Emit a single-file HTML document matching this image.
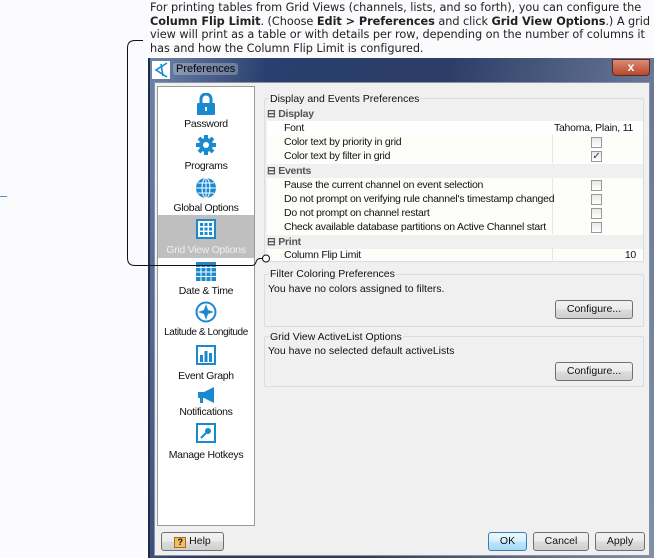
<!DOCTYPE html>
<html><head><meta charset="utf-8"><style>
*{box-sizing:border-box;margin:0;padding:0}
body{width:654px;height:558px;background:#fbfbfd;position:relative;overflow:hidden;font-family:"Liberation Sans",sans-serif;font-size:11px;color:#111}
.a{position:absolute;white-space:nowrap}
.intro{left:150px;top:1px;width:504px;font-family:"DejaVu Sans",sans-serif;font-size:11.3px;line-height:13.7px;color:#222;letter-spacing:-0.05px;white-space:normal}
.win{left:148px;top:58px;width:506px;height:500px;background:linear-gradient(100deg,#6f85a8 0%,#2a3f6e 20%,#2b3c66 50%,#5f6e8e 80%,#8090aa 100%);border-left:2px solid #1c2a4c}
.body{left:154px;top:82px;width:496px;height:474px;background:#f0f0f0;border:1px solid #8a93a6}
.side{left:157px;top:86px;width:98px;height:440px;background:#fff;border:1px solid #9a9a9a}
.it{position:absolute;left:0;width:96px;text-align:center;font-size:10.5px;white-space:nowrap;letter-spacing:-0.3px}
.grp{border:1px solid #d8dce4;border-radius:2px}
.row{position:absolute;left:267px;width:376px;height:14px;line-height:14px;font-size:10.5px;white-space:nowrap;letter-spacing:-0.25px}
.row span{position:absolute;left:17px;white-space:nowrap}
.row .v{left:285px;width:90px;height:14px;border-left:1px solid #e6e6e6}
.hd{font-weight:bold;color:#555}
.cb{position:absolute;left:38px;top:2px;width:11px;height:11px;border:1px solid #999;background:linear-gradient(#e8e8e8,#fff)}
.btn{position:absolute;height:19px;border:1px solid #707070;border-radius:3px;background:linear-gradient(#f2f2f2,#ebebeb 50%,#dcdcdc 50%,#cfcfcf);text-align:center;line-height:17px;font-size:10.5px;white-space:nowrap}
</style></head><body>
<div class="a" style="left:0;top:196px;width:7px;height:1px;background:#5a8fd0"></div>
<div class="a intro">For printing tables from Grid Views (channels, lists, and so forth), you can configure the <b>Column Flip Limit</b>. (Choose <b>Edit &gt; Preferences</b> and click <b>Grid View Options</b>.) A grid view will print as a table or with details per row, depending on the number of columns it has and how the Column Flip Limit is configured.</div>
<div class="a win"></div>
<svg class="a" style="left:152px;top:61px" width="18" height="18"><rect width="18" height="18" fill="#fff"/><path d="M15 2 L4 9 L15 16 M9 3 L11 15" stroke="#1a8ad0" stroke-width="1.6" fill="none"/></svg>
<div class="a" style="left:173px;top:63px;font-size:11px;color:#000;background:rgba(255,255,255,.25);padding:0 3px;border-radius:3px">Preferences</div>
<div class="a" style="left:612px;top:59px;width:38px;height:17px;border-radius:0 0 4px 4px;background:linear-gradient(#d98c76,#b8482c);border:1px solid #5a2a20;color:#fff;font-weight:bold;text-align:center;line-height:15px;font-size:12px">x</div>
<div class="a body"></div>
<div class="a side">
<svg class="a" style="left:38px;top:6px" width="20" height="22"><path d="M5 10 V6 a5 5 0 0 1 10 0 V10" stroke="#1a8ad0" stroke-width="3" fill="none"/><rect x="1" y="10" width="18" height="12" rx="1" fill="#1a8ad0"/><rect x="9" y="14" width="2" height="4" fill="#fff"/></svg>
<div class="it" style="top:31px">Password</div>
<svg class="a" style="left:38px;top:48px" width="20" height="20"><circle cx="10" cy="10" r="7" fill="#1a8ad0"/><g stroke="#1a8ad0" stroke-width="4"><path d="M10 0V20M0 10H20M3 3L17 17M17 3L3 17"/></g><circle cx="10" cy="10" r="3" fill="#fff"/></svg>
<div class="it" style="top:73px">Programs</div>
<svg class="a" style="left:37px;top:90px" width="22" height="22"><circle cx="11" cy="11" r="10" fill="#1a8ad0"/><g stroke="#fff" stroke-width="1" fill="none"><ellipse cx="11" cy="11" rx="4" ry="10"/><path d="M1 11H21M3 6H19M3 16H19M11 1V21"/></g></svg>
<div class="it" style="top:115px">Global Options</div>
<div class="a" style="left:0;top:128px;width:96px;height:43px;background:#bfbfbf"></div>
<svg class="a" style="left:38px;top:132px" width="20" height="20"><rect x="1" y="1" width="18" height="18" fill="#fff" stroke="#1a8ad0" stroke-width="2"/><g fill="#1a8ad0"><rect x="4" y="4" width="3" height="3"/><rect x="8.5" y="4" width="3" height="3"/><rect x="13" y="4" width="3" height="3"/><rect x="4" y="8.5" width="3" height="3"/><rect x="8.5" y="8.5" width="3" height="3"/><rect x="13" y="8.5" width="3" height="3"/><rect x="4" y="13" width="3" height="3"/><rect x="8.5" y="13" width="3" height="3"/><rect x="13" y="13" width="3" height="3"/></g></svg>
<div class="it" style="top:157px;color:#eee">Grid View Options</div>
<svg class="a" style="left:38px;top:175px" width="20" height="19"><rect width="20" height="19" fill="#1a8ad0"/><g stroke="#fff" stroke-width="1"><path d="M0 5.5H20M0 10H20M0 14.5H20M5 4V19M10 4V19M15 4V19"/></g></svg>
<div class="it" style="top:198px">Date &amp; Time</div>
<svg class="a" style="left:37px;top:214px" width="22" height="22"><circle cx="11" cy="11" r="9.5" fill="#fff" stroke="#1a8ad0" stroke-width="2"/><path d="M11 3L13 9L19 11L13 13L11 19L9 13L3 11L9 9Z" fill="#1a8ad0"/></svg>
<div class="it" style="top:240px;font-size:10px;letter-spacing:-0.4px">Latitude &amp; Longitude</div>
<svg class="a" style="left:38px;top:258px" width="20" height="20"><rect x="1" y="1" width="18" height="18" fill="#fff" stroke="#1a8ad0" stroke-width="2"/><g fill="#1a8ad0"><rect x="4" y="10" width="3" height="7"/><rect x="8.5" y="6" width="3" height="11"/><rect x="13" y="8" width="3" height="9"/></g></svg>
<div class="it" style="top:283px">Event Graph</div>
<svg class="a" style="left:38px;top:300px" width="20" height="16"><path d="M2 5H8L18 0V16L8 11H2Z" fill="#1a8ad0"/><rect x="4" y="11" width="3" height="5" fill="#1a8ad0"/></svg>
<div class="it" style="top:319px">Notifications</div>
<svg class="a" style="left:38px;top:336px" width="20" height="20"><rect x="1" y="1" width="18" height="18" fill="#fff" stroke="#1a8ad0" stroke-width="2"/><circle cx="12" cy="8" r="3" fill="#1a8ad0"/><path d="M10 10L5 15" stroke="#1a8ad0" stroke-width="2"/></svg>
<div class="it" style="top:362px">Manage Hotkeys</div>
</div>
<div class="a grp" style="left:264px;top:98px;width:380px;height:164px"></div>
<div class="a" style="left:269px;top:93px;background:#f0f0f0;padding:0 1px;font-size:10.5px">Display and Events Preferences</div>
<div class="a" style="left:267px;top:122px;width:376px;height:139px;background:#fdfdfa"></div>
<div class="row hd" style="top:107px"><span style="left:0">⊟ Display</span></div>
<div class="row" style="top:121px;background:#fff"><span>Font</span><span style="left:auto;right:10px">Tahoma, Plain, 11</span></div>
<div class="row" style="top:135px"><span class="v"><i class="cb"></i></span><span>Color text by priority in grid</span></div>
<div class="row" style="top:149px"><span class="v"><i class="cb" style="color:#335;font-size:10px;line-height:9px;text-align:center;font-style:normal">✓</i></span><span>Color text by filter in grid</span></div>
<div class="row hd" style="top:164px;background:#f0f0f0"><span style="left:0">⊟ Events</span></div>
<div class="row" style="top:178px"><span class="v"><i class="cb"></i></span><span>Pause the current channel on event selection</span></div>
<div class="row" style="top:192px"><span class="v"><i class="cb"></i></span><span>Do not prompt on verifying rule channel's timestamp changed</span></div>
<div class="row" style="top:206px"><span class="v"><i class="cb"></i></span><span>Do not prompt on channel restart</span></div>
<div class="row" style="top:220px"><span class="v"><i class="cb"></i></span><span>Check available database partitions on Active Channel start</span></div>
<div class="row hd" style="top:235px;background:#f0f0f0"><span style="left:0">⊟ Print</span></div>
<div class="row" style="top:248px"><span>Column Flip Limit</span><span class="v" style="text-align:right;padding-right:6px">10</span></div>
<div class="a grp" style="left:264px;top:274px;width:380px;height:53px"></div>
<div class="a" style="left:269px;top:268px;background:#f0f0f0;padding:0 1px;font-size:10.5px">Filter Coloring Preferences</div>
<div class="a" style="left:268px;top:283px;font-size:10.5px">You have no colors assigned to filters.</div>
<div class="btn" style="left:555px;top:300px;width:78px">Configure...</div>
<div class="a grp" style="left:264px;top:336px;width:380px;height:51px"></div>
<div class="a" style="left:269px;top:331px;background:#f0f0f0;padding:0 1px;font-size:10.5px">Grid View ActiveList Options</div>
<div class="a" style="left:268px;top:345px;font-size:10.5px">You have no selected default activeLists</div>
<div class="btn" style="left:555px;top:362px;width:78px">Configure...</div>
<div class="btn" style="left:161px;top:532px;width:63px"><span style="display:inline-block;width:12px;height:11px;background:#f0c060;border:1px solid #a07020;font-size:9px;line-height:9px;font-weight:bold;vertical-align:-1px">?</span> Help</div>
<div class="btn" style="left:488px;top:532px;width:39px;border-color:#3c7fb1;background:linear-gradient(#eaf6fd,#d9f0fc 50%,#bee6fd 50%,#a7d9f5)">OK</div>
<div class="btn" style="left:533px;top:532px;width:56px">Cancel</div>
<div class="btn" style="left:595px;top:532px;width:50px">Apply</div>
<svg class="a" style="left:0;top:0" width="654" height="558"><path d="M143 40.5 H135 Q127.5 40.5 127.5 48 V258 Q127.5 265.5 135 265.5 H252 Q255 265.5 256 262 Q257 258.5 260 258.5 H262" fill="none" stroke="#111" stroke-width="1"/><circle cx="266" cy="258.5" r="3.5" fill="#fff" stroke="#111"/></svg>
</body></html>
